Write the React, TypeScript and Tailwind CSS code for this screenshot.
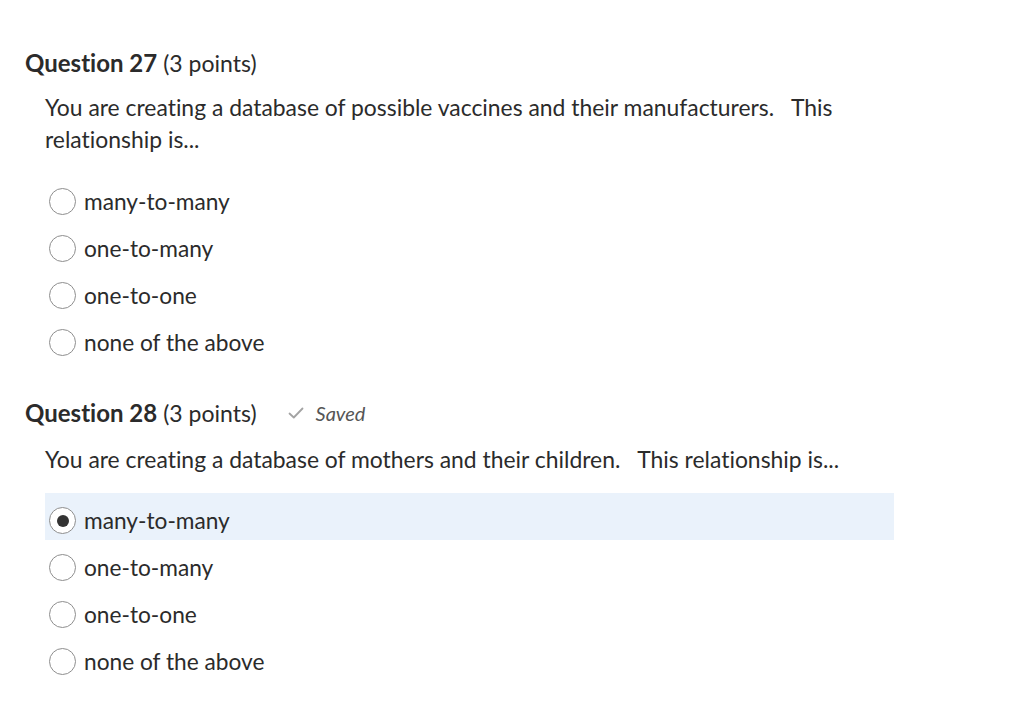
import React from 'react';

type Question = {
  number: number;
  points: number;
  saved?: boolean;
  prompt: string[];
  options: string[];
  selected?: number;
  promptClass: string;
  optionsClass: string;
};

const QUESTIONS: Question[] = [
  {
    number: 27,
    points: 3,
    prompt: [
      'You are creating a database of possible vaccines and their manufacturers.\u00a0\u00a0 This',
      'relationship is...',
    ],
    options: ['many-to-many', 'one-to-many', 'one-to-one', 'none of the above'],
    promptClass: 'mt-[13px]',
    optionsClass: 'mt-[19px]',
  },
  {
    number: 28,
    points: 3,
    saved: true,
    prompt: ['You are creating a database of mothers and their children.\u00a0\u00a0 This relationship is...'],
    options: ['many-to-many', 'one-to-many', 'one-to-one', 'none of the above'],
    selected: 0,
    promptClass: 'mt-[15px]',
    optionsClass: 'mt-[18px]',
  },
];

const Radio: React.FC<{ checked: boolean }> = ({ checked }) => (
  <span className="flex h-[27px] w-[27px] shrink-0 items-center justify-center rounded-full border border-[#8e8e8e] bg-white">
    {checked && <span className="h-[12px] w-[12px] rounded-full bg-[#333333]" />}
  </span>
);

const QuestionBlock: React.FC<{ q: Question }> = ({ q }) => (
  <div>
    <div className="flex items-center h-[30px]">
      <span className="text-[24px] font-bold">Question {q.number}</span>
      <span className="ml-[6px] text-[23px]">({q.points} points)</span>
      {q.saved && (
        <span className="ml-[31px] flex items-center gap-[12px] text-[20px] italic text-[#555555]">
          <svg width="16" height="12" viewBox="0 0 16 12" fill="none">
            <path d="M1.5 6.5 L5.8 10.5 L14.5 1.5" stroke="#a3a3a3" strokeWidth="1.8" strokeLinecap="round" strokeLinejoin="round" />
          </svg>
          Saved
        </span>
      )}
    </div>
    <div className={`ml-[20px] text-[22.9px] leading-[32px] ${q.promptClass}`}>
      {q.prompt.map((line) => (
        <div key={line}>{line}</div>
      ))}
    </div>
    <div className={`ml-[20px] w-[849px] ${q.optionsClass}`}>
      {q.options.map((opt, i) => (
        <div
          key={opt}
          className={`flex h-[47px] items-center gap-[8px] pl-[4px] pt-[8px] ${
            q.selected === i ? 'bg-[#eaf2fb]' : ''
          }`}
        >
          <Radio checked={q.selected === i} />
          <span className="-mt-[8px] pt-[8px] text-[22.7px] leading-[24px]">{opt}</span>
        </div>
      ))}
    </div>
  </div>
);

export default function App() {
  return (
    <div
      className="min-h-[707px] bg-white pl-[25px] pt-[48px] text-[#2b2b2b]"
      style={{ fontFamily: 'Lato, "Noto Sans", sans-serif', fontVariantLigatures: 'none' }}
    >
      <QuestionBlock q={QUESTIONS[0]} />
      <div className="mt-[36px]">
        <QuestionBlock q={QUESTIONS[1]} />
      </div>
    </div>
  );
}
